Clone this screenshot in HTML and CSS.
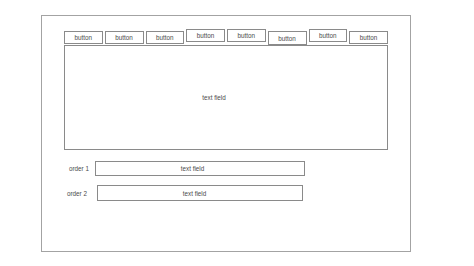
FILE: index.html
```html
<!DOCTYPE html>
<html lang="en">
<head>
  <meta charset="UTF-8" />
  <title>Wireframe</title>
  <link rel="stylesheet" href="styles.css">
</head>
<body>
  <div class="frame">
    <div class="toolbar">
      <div class="btn">button</div>
      <div class="btn">button</div>
      <div class="btn">button</div>
      <div class="btn raise">button</div>
      <div class="btn raise">button</div>
      <div class="btn low">button</div>
      <div class="btn raise">button</div>
      <div class="btn">button</div>
    </div>
    <div class="field big">text field</div>
    <div class="order order-1">
      <span class="order-label">order 1</span>
      <div class="field small">text field</div>
    </div>
    <div class="order order-2">
      <span class="order-label">order 2</span>
      <div class="field small">text field</div>
    </div>
  </div>
</body>
</html>
```

FILE: styles.css
```css
:root {
  --line: #8a8a8a;
  --frame-line: #a3a3a3;
  --text: #4a4a4a;
}

* {
  box-sizing: border-box;
  margin: 0;
  padding: 0;
}

body {
  font-family: 'Liberation Sans', Arial, sans-serif;
  font-size: 6.3px;
  color: var(--text);
  background: #fff;
}

.frame {
  margin: 15px 0 0 41px;
  width: 370px;
  height: 237px;
  border: 1px solid var(--frame-line);
  padding: 15px 22px 0 22px;
}

.toolbar {
  display: flex;
  gap: 2px;
  height: 14px;
  align-items: flex-start;
}

.btn {
  flex: 1;
  height: 13px;
  border: 1px solid var(--line);
  display: flex;
  align-items: center;
  justify-content: center;
}

.btn.raise {
  margin-top: -2px;
}

.btn.low {
  height: 14px;
}

.field {
  border: 1px solid var(--line);
  display: flex;
  align-items: center;
  justify-content: center;
}

/* the label text sits a little left of centre in the sketch */
.field.big {
  height: 105px;
  padding-right: 24px;
}

.order {
  display: flex;
  align-items: center;
}

.order-1 {
  margin-top: 11px;
  padding-left: 5px;
}

.order-2 {
  margin-top: 9px;
  padding-left: 3px;
}

.order-label {
  width: 26px;
}

.order-2 .order-label {
  width: 30px;
}

.order-1 .field.small {
  width: 210px;
  height: 15px;
  padding-right: 15px;
}

.order-2 .field.small {
  width: 206px;
  height: 16px;
  padding-right: 11px;
}
```
